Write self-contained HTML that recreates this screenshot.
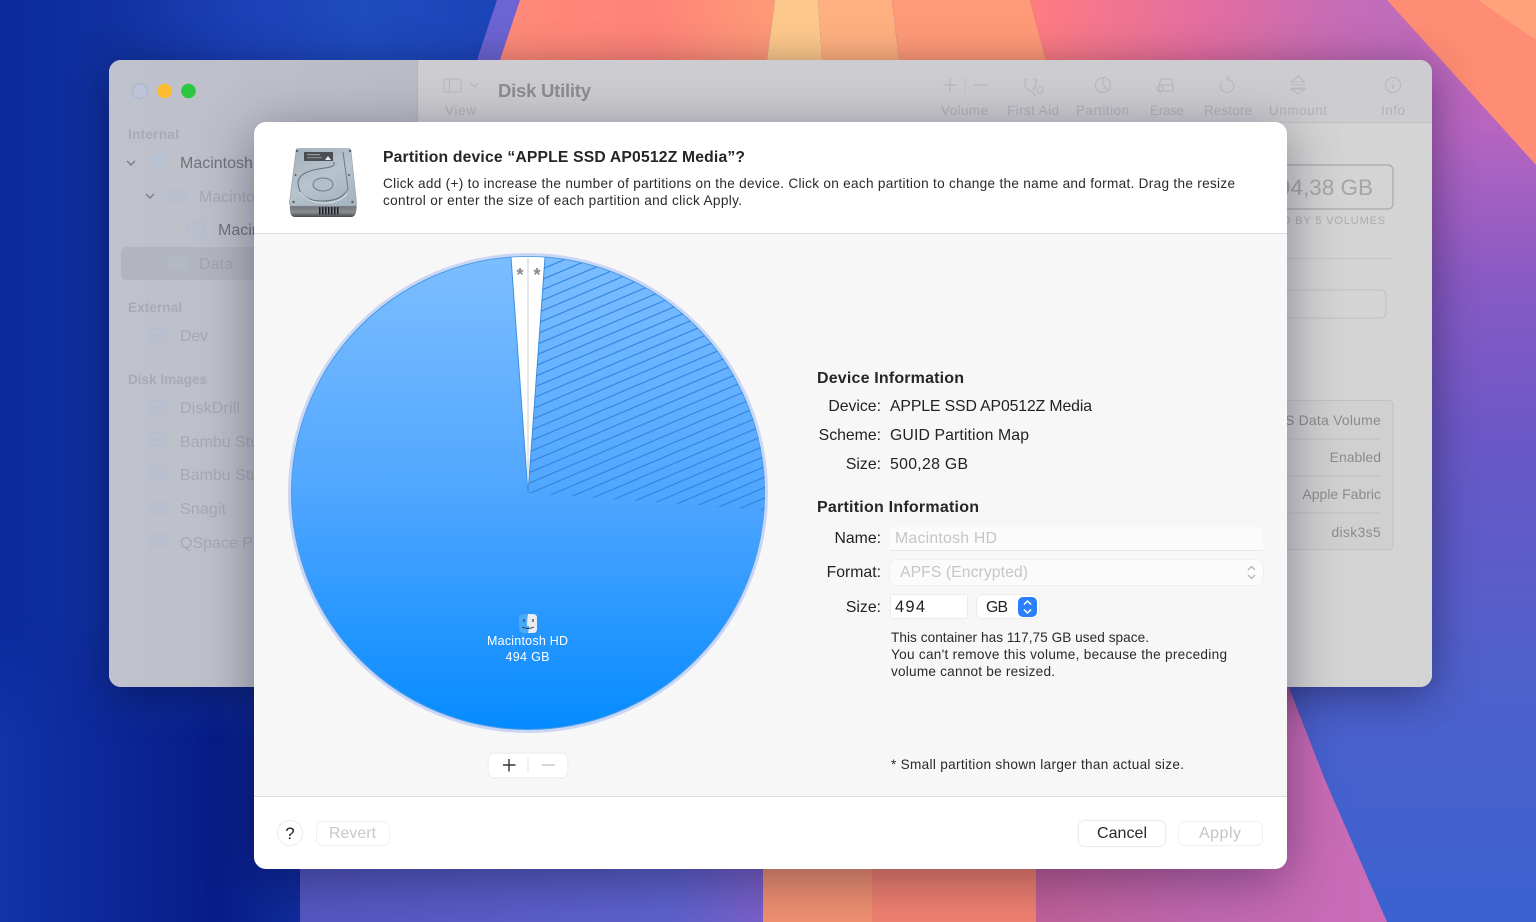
<!DOCTYPE html>
<html><head><meta charset="utf-8"><title>Disk Utility</title>
<style>
html,body{margin:0;padding:0;width:1536px;height:922px;overflow:hidden;background:#1a3ab0}
svg{display:block;overflow:hidden}
text{font-family:"Liberation Sans",sans-serif;white-space:pre}
.lbl{font-size:13.5px;fill:#b3b2b6}
.sb{font-size:16px}
.sh{font-size:13.5px;font-weight:bold;fill:#a8aab4}
.dk{fill:#222;font-size:15.8px}
.nt{fill:#2a2a2a;font-size:13.6px}
</style></head><body>
<svg width="1536" height="922" viewBox="0 0 1536 922" xmlns="http://www.w3.org/2000/svg">
<defs>
<linearGradient id="bgL" gradientUnits="userSpaceOnUse" x1="0" x2="500" y1="0" y2="0"><stop offset="0" stop-color="#0a2a9c"/><stop offset=".22" stop-color="#10319f"/><stop offset=".45" stop-color="#1a3fb4"/><stop offset=".72" stop-color="#1f4bbd"/><stop offset="1" stop-color="#1c44b8"/></linearGradient>
<linearGradient id="bgLb" gradientUnits="userSpaceOnUse" x1="0" x2="300" y1="0" y2="0"><stop offset="0" stop-color="#1034a8"/><stop offset=".4" stop-color="#0c2696"/><stop offset=".72" stop-color="#081c88"/><stop offset="1" stop-color="#102c9c"/></linearGradient>
<linearGradient id="fadeg" x1="0" x2="0" y1="0" y2="1"><stop offset="0" stop-color="#000"/><stop offset=".4" stop-color="#fff"/><stop offset="1" stop-color="#fff"/></linearGradient>
<mask id="fade" maskUnits="userSpaceOnUse" x="0" y="620" width="305" height="302"><rect x="0" y="620" width="305" height="302" fill="url(#fadeg)"/></mask>
<linearGradient id="bgP" gradientUnits="userSpaceOnUse" x1="500" x2="775" y1="0" y2="0"><stop offset="0" stop-color="#ff8a78"/><stop offset=".55" stop-color="#ff8378"/><stop offset="1" stop-color="#fe9a78"/></linearGradient>
<linearGradient id="bgQ" gradientUnits="userSpaceOnUse" x1="1030" x2="1400" y1="0" y2="0"><stop offset="0" stop-color="#ff7c80"/><stop offset=".45" stop-color="#e46ea0"/><stop offset=".8" stop-color="#c86cb4"/><stop offset="1" stop-color="#bf6cbc"/></linearGradient>
<linearGradient id="bgR" gradientUnits="userSpaceOnUse" x1="0" x2="0" y1="0" y2="922"><stop offset="0" stop-color="#c46cb8"/><stop offset=".14" stop-color="#b665c0"/><stop offset=".3" stop-color="#8a5ac4"/><stop offset=".48" stop-color="#6a58c6"/><stop offset=".72" stop-color="#5060cc"/><stop offset="1" stop-color="#3a62d0"/></linearGradient>
<linearGradient id="bgB" x1="0" x2="1" y1="0" y2="0"><stop offset="0" stop-color="#5558c0"/><stop offset=".8" stop-color="#5d62cc"/><stop offset="1" stop-color="#7a60c8"/></linearGradient>
<linearGradient id="bgPk" gradientUnits="userSpaceOnUse" x1="1036" x2="1386" y1="0" y2="0"><stop offset="0" stop-color="#c06098"/><stop offset=".5" stop-color="#c068b0"/><stop offset="1" stop-color="#cc6cb8"/></linearGradient>
<linearGradient id="pie" x1="0" x2="0" y1="0" y2="1"><stop offset="0" stop-color="#7cbeff"/><stop offset=".5" stop-color="#50a6ff"/><stop offset="1" stop-color="#058bff"/></linearGradient>
<linearGradient id="hdd" x1="0" x2=".6" y1="0" y2="1"><stop offset="0" stop-color="#a4b1bc"/><stop offset=".6" stop-color="#b7c4cd"/><stop offset="1" stop-color="#a8b6c1"/></linearGradient>
<linearGradient id="hddb" x1="0" x2="0" y1="0" y2="1"><stop offset="0" stop-color="#6c7073"/><stop offset=".6" stop-color="#8a8e92"/><stop offset="1" stop-color="#44484c"/></linearGradient>
<linearGradient id="side" x1="0" x2="1" y1="0" y2="0"><stop offset="0" stop-color="#bfc2cc"/><stop offset="1" stop-color="#b9bcc5"/></linearGradient>
<linearGradient id="main" x1="0" x2="1" y1="0" y2="0"><stop offset="0" stop-color="#c4c4c6"/><stop offset=".1" stop-color="#cfcfcf"/><stop offset="1" stop-color="#d4d4d4"/></linearGradient>
<pattern id="hatch" width="14" height="9.6" patternUnits="userSpaceOnUse" patternTransform="translate(528 493) rotate(-23)"><line x1="0" x2="14" y1="1" y2="1" stroke="#2f82de" stroke-width="1.100"/></pattern>
<clipPath id="w"><rect x="109" y="60" width="1323" height="627" rx="12"/></clipPath>
<clipPath id="d"><rect x="254" y="122" width="1033" height="747" rx="12"/></clipPath>
<g id="drv" fill="none" stroke="#aebcd0" stroke-width="1.100" opacity=".65"><path d="M1 7 3.500 1H16.500L19 7V12Q19 14 17 14H3Q1 14 1 12Z" fill="#b3bfd0" fill-opacity=".45"/><path d="M1 8H19"/></g>
</defs>

<!-- wallpaper -->
<rect width="1536" height="922" fill="url(#bgL)"/>
<rect x="0" y="620" width="305" height="302" fill="url(#bgLb)" mask="url(#fade)"/>
<polygon points="497,0 525,0 505,60 500,125 450,125 477,60" fill="#6c64d2"/>
<polygon points="520,0 775,0 767,60 765,125 490,125 500,60" fill="url(#bgP)"/>
<polygon points="775,0 818,0 822,60 824,125 765,125 767,60" fill="#fdc98b"/>
<polygon points="818,0 892,0 899,60 905,125 824,125 822,60" fill="#ffb080"/>
<polygon points="892,0 1030,0 1046,60 1050,125 905,125 899,60" fill="#ff9a78"/>
<polygon points="1030,0 1400,0 1400,125 1050,125 1046,60" fill="url(#bgQ)"/>
<rect x="1400" y="0" width="136" height="922" fill="url(#bgR)"/>
<polygon points="1387,0 1536,0 1536,165" fill="#ff8c74"/>
<polygon points="1478,0 1536,0 1536,40" fill="#ffa27c"/>
<rect x="1036" y="680" width="500" height="242" fill="url(#bgPk)"/>
<polygon points="1286,680 1536,680 1536,922 1387,922 1325,780" fill="url(#bgR)"/>
<rect x="763" y="860" width="109" height="62" fill="#f09070"/>
<rect x="872" y="860" width="164" height="62" fill="#f08070"/>
<rect x="300" y="860" width="463" height="62" fill="url(#bgB)"/>

<!-- window -->
<g style="filter:drop-shadow(0 8px 22px rgba(0,0,20,.42))"><rect x="109" y="60" width="1323" height="627" rx="12" fill="#d3d3d3"/></g>
<g clip-path="url(#w)">
<rect x="417" y="60" width="1015" height="627" fill="url(#main)"/>
<rect x="417" y="60" width="1015" height="63" fill="#cdccd0"/>
<rect x="417" y="122" width="1015" height="1" fill="#c0c0c2"/>
<rect x="109" y="60" width="308" height="627" fill="url(#side)"/>
<rect x="417" y="60" width="1" height="627" fill="#b4b5bb"/>
<circle cx="140" cy="91" r="7.300" fill="#bfc4da" stroke="#a9aec6" stroke-width=".8"/>
<circle cx="164.500" cy="91" r="7.300" fill="#febb2f"/>
<circle cx="188.500" cy="91" r="7.300" fill="#2cc641"/>

<rect x="121" y="247" width="200" height="33" rx="6" fill="#b3b5be"/>
<text x="128" y="139" class="sh" textLength="51">Internal</text>
<path d="M127 161l4 4 4-4" fill="none" stroke="#7c7d86" stroke-width="1.500"/>
<g fill="none" stroke="#b2bfd4" stroke-width="1.100"><path d="M158 154l8 4-8 4-8-4z" fill="#b7c3d6"/><path d="M150 161l8 4 8-4M150 164.500l8 4 8-4"/></g>
<text x="180" y="168" class="sb" fill="#717279">Macintosh HD</text>
<path d="M146 194l4 4 4-4" fill="none" stroke="#7c7d86" stroke-width="1.500"/>
<use href="#drv" x="167" y="189"/>
<text x="199" y="202" class="sb" fill="#a7a9b1">Macintosh HD</text>
<use href="#drv" x="186" y="222"/>
<text x="218" y="235" class="sb" fill="#717279">Macintosh HD</text>
<use href="#drv" x="167" y="255"/>
<text x="199" y="269" class="sb" fill="#a3a5ae" textLength="34">Data</text>
<text x="128" y="312" class="sh" textLength="54">External</text>
<use href="#drv" x="148" y="327"/>
<text x="180" y="341" class="sb" fill="#a7a9b1" textLength="28">Dev</text>
<text x="128" y="384" class="sh" textLength="79">Disk Images</text>
<use href="#drv" x="148" y="399"/>
<text x="180" y="413" class="sb" fill="#a7a9b1" textLength="60">DiskDrill</text>
<use href="#drv" x="148" y="432"/>
<text x="180" y="447" class="sb" fill="#a7a9b1">Bambu Studio</text>
<use href="#drv" x="148" y="466"/>
<text x="180" y="480" class="sb" fill="#a7a9b1">Bambu Studio</text>
<use href="#drv" x="148" y="500"/>
<text x="180" y="514" class="sb" fill="#a7a9b1" textLength="46">Snagit</text>
<use href="#drv" x="148" y="533"/>
<text x="180" y="548" class="sb" fill="#a7a9b1">QSpace Pro</text>

<!-- toolbar -->
<g fill="none" stroke="#b9b8bc" stroke-width="1.100">
<rect x="444" y="79" width="17" height="13" rx="2"/><path d="M449.500 79v13"/><path d="M471 83.500l3.500 3.500 3.500-3.500" stroke-width="1.300"/>
<path d="M950 78v14M943 85h14M974 85h13" stroke-width="1.300"/><path d="M965 78v14" stroke-width=".7"/>
<path d="M1025 79v5q0 5 5 7t5 5"/><path d="M1025 79h3M1036 79h-3M1036 79v5q0 4-4 6"/><circle cx="1040" cy="90" r="3"/>
<circle cx="1103" cy="85" r="7.500"/><path d="M1103 78v7l4.500 5"/>
<path d="M1159 85l2-6h10l2 6v6h-14z"/><path d="M1159 85h14"/><circle cx="1160" cy="89" r="3"/>
<path d="M1230 76l-3.500 3 3.500 3M1227 79.500a6.500 6.500 0 1 1-4.500 2"/>
<path d="M1298 76l7 6h-14zM1291 85h14M1291 88h14M1298 94l7-5h-14z"/>
<circle cx="1393" cy="85" r="7.500"/><path d="M1393 84v5M1393 80.500v1" stroke-width="1.300"/>
</g>
<text x="498" y="97" font-size="18.500" font-weight="bold" fill="#8d8c90" textLength="93">Disk Utility</text>
<text x="445" y="115" class="lbl" textLength="31">View</text>
<text x="941" y="115" class="lbl" textLength="47">Volume</text>
<text x="1007" y="115" class="lbl" textLength="52">First Aid</text>
<text x="1076" y="115" class="lbl" textLength="53">Partition</text>
<text x="1150" y="115" class="lbl" textLength="34">Erase</text>
<text x="1204" y="115" class="lbl" textLength="48">Restore</text>
<text x="1269" y="115" class="lbl" textLength="58">Unmount</text>
<text x="1381" y="115" class="lbl" textLength="24">Info</text>

<!-- main pane -->
<rect x="1200" y="165" width="193" height="44" rx="5" fill="none" stroke="#a9a9a9" stroke-width="1.200"/>
<text x="1373" y="195" text-anchor="end" font-size="22.500" fill="#a6a6a6">494,38 GB</text>
<text x="1386" y="224" text-anchor="end" font-size="11" fill="#adadad" letter-spacing=".85">USED BY 5 VOLUMES</text>
<rect x="1200" y="258" width="193" height="1" fill="#c6c6c6"/>
<rect x="1200" y="290" width="186" height="28" rx="5" fill="none" stroke="#c0c0c0"/>
<rect x="1200" y="400.500" width="193" height="149" rx="4" fill="#d0d0d0" stroke="#c2c2c2"/>
<path d="M1200 439h181M1200 476h181M1200 513h181" stroke="#c0c0c0"/>
<g text-anchor="end" font-size="14" fill="#8c8c8c">
<text x="1381" y="425" letter-spacing=".2">APFS Data Volume</text>
<text x="1381" y="462">Enabled</text>
<text x="1381" y="499">Apple Fabric</text>
<text x="1381" y="537" letter-spacing=".3">disk3s5</text>
</g>
</g>

<!-- dialog -->
<g style="filter:drop-shadow(0 10px 26px rgba(0,0,30,.38))"><rect x="254" y="122" width="1033" height="747" rx="12" fill="#fff"/></g>
<g clip-path="url(#d)">
<rect x="254" y="233" width="1033" height="563" fill="#f7f7f7"/>
<rect x="254" y="233" width="1033" height="1" fill="#dcdcdc"/>
<rect x="254" y="796" width="1033" height="1" fill="#dcdcdc"/>
</g>

<!-- HDD icon -->
<g>
<path d="M290 205 Q289 217 295 217H351Q357 217 356.500 205Z" fill="url(#hddb)"/>
<path d="M296 151q0-2.500 2.500-2.500h50q2.500 0 2.500 2.500l5.500 51q.5 4-2.500 4H292q-3 0-2.500-4Z" fill="url(#hdd)" stroke="#8e9ba6" stroke-width=".6"/>
<rect x="304" y="152" width="29" height="9" fill="#4b4e53"/>
<path d="M325 160l3-4 3 4z" fill="#eee"/>
<rect x="307" y="154" width="13" height="1.200" fill="#999"/><rect x="307" y="157" width="15" height="1.200" fill="#888"/>
<path d="M334 162v3q-2 2-9 3-27 3-27 15 1 18 24 18 17 0 23-8" fill="none" stroke="#69757f" stroke-width="1.100"/>
<path d="M300 192q8 11 24 11 15 0 23-9" fill="none" stroke="#d8e0e5" stroke-width="1"/>
<path d="M343 152l5 37-3 4" fill="none" stroke="#6f7b85" stroke-width="1"/>
<ellipse cx="323" cy="184.500" rx="10" ry="6.500" fill="#b3c0ca" stroke="#6f7b85"/>
<g fill="#555c63"><circle cx="297" cy="151" r="1.200"/><circle cx="350" cy="151" r="1.200"/><circle cx="295.500" cy="175" r="1"/><circle cx="349" cy="175" r="1"/><circle cx="293.500" cy="202" r="1.200"/><circle cx="352.500" cy="202" r="1.200"/></g>
<g fill="#1f2226"><rect x="319" y="207" width="1.500" height="7.500"/><rect x="322" y="207" width="1.500" height="7.500"/><rect x="325" y="207" width="1.500" height="7.500"/><rect x="328" y="207" width="1.500" height="7.500"/><rect x="331" y="207" width="1.500" height="7.500"/><rect x="334" y="207" width="1.500" height="7.500"/><rect x="337" y="207" width="1.500" height="7.500"/></g>
</g>

<text x="383" y="162" font-size="15.700" font-weight="bold" fill="#252525" textLength="362">Partition device “APPLE SSD AP0512Z Media”?</text>
<text x="383" y="188" class="nt" textLength="852">Click add (+) to increase the number of partitions on the device. Click on each partition to change the name and format. Drag the resize</text>
<text x="383" y="205" class="nt" textLength="359">control or enter the size of each partition and click Apply.</text>

<!-- pie -->
<circle cx="528" cy="493" r="240" fill="#c9d6f5"/>
<circle cx="528" cy="493" r="236.500" fill="url(#pie)" stroke="#4a9be8" stroke-width="1"/>
<path d="M528 493 L511 257.500 A236.500 236.500 0 0 1 545 257.500Z" fill="#fff"/>
<path d="M528 493 L511 257.500M528 493 L545 257.500" stroke="#3f8fe0" stroke-width="1"/>
<path d="M528 258V478" stroke="#dedede" stroke-width="1.500"/>
<path d="M528 493 L545 257.500 A236.500 236.500 0 0 1 764.500 510Z" fill="url(#hatch)"/>
<text x="520" y="281" text-anchor="middle" font-size="18" font-weight="bold" fill="#8a8a8a">*</text>
<text x="537" y="281" text-anchor="middle" font-size="18" font-weight="bold" fill="#8a8a8a">*</text>

<!-- finder icon -->
<rect x="519" y="614" width="18" height="19" rx="4" fill="#4aa8f5"/>
<path d="M528 614H533q4 0 4 4v11q0 4-4 4h-5q1-4 1-7h-2q0-7 1-12z" fill="#e9edf2"/>
<path d="M524 619v3M533 619v3" stroke="#2b3a50" stroke-width="1.200"/>
<path d="M522 627q6 3 12 0" stroke="#2b3a50" stroke-width=".9" fill="none"/>
<text x="527.500" y="645" text-anchor="middle" font-size="12.500" fill="#fff" textLength="81">Macintosh HD</text>
<text x="527.500" y="661" text-anchor="middle" font-size="12.500" fill="#fff" textLength="44">494 GB</text>

<!-- +/- -->
<g style="filter:drop-shadow(0 .5px .8px rgba(0,0,0,.2))"><rect x="488.500" y="753.500" width="79" height="24" rx="6" fill="#fff"/></g>
<path d="M503 765h12.500M509 759v12.500" stroke="#333" stroke-width="1.400"/>
<path d="M542 765h13" stroke="#c4c4c4" stroke-width="1.400"/>
<path d="M528 758v15" stroke="#e2e2e2"/>

<!-- info -->
<text x="817" y="383" font-size="16" font-weight="bold" fill="#262626" textLength="147">Device Information</text>
<g text-anchor="end">
<text x="881" y="411" class="dk">Device:</text>
<text x="881" y="440" class="dk">Scheme:</text>
<text x="881" y="469" class="dk">Size:</text>
<text x="881" y="543" class="dk">Name:</text>
<text x="881" y="577" class="dk">Format:</text>
<text x="881" y="612" class="dk">Size:</text>
</g>
<text x="890" y="411" class="dk" textLength="202">APPLE SSD AP0512Z Media</text>
<text x="890" y="440" class="dk" textLength="139">GUID Partition Map</text>
<text x="890" y="469" class="dk" textLength="78">500,28 GB</text>
<text x="817" y="512" font-size="16" font-weight="bold" fill="#262626" textLength="162">Partition Information</text>

<rect x="890" y="527" width="373" height="23" fill="#fbfbfb"/>
<rect x="890" y="550" width="373" height="1" fill="#e8e8e8"/>
<text x="895" y="543" font-size="15.800" fill="#c6c6c6" textLength="102">Macintosh HD</text>
<g style="filter:drop-shadow(0 .5px .8px rgba(0,0,0,.1))"><rect x="890" y="560" width="373" height="25" rx="6" fill="#fbfbfb"/></g>
<text x="900" y="577" font-size="15.800" fill="#c6c6c6" textLength="128">APFS (Encrypted)</text>
<path d="M1248 570l3.500-3.500 3.500 3.500M1248 575l3.500 3.500 3.500-3.500" fill="none" stroke="#b5b5b5" stroke-width="1.300"/>

<g style="filter:drop-shadow(0 .5px .8px rgba(0,0,0,.16))"><rect x="891" y="595" width="76" height="23" fill="#fff"/></g>
<text x="895" y="612" font-size="16.500" fill="#222" textLength="30">494</text>
<g style="filter:drop-shadow(0 .5px .8px rgba(0,0,0,.16))"><rect x="977" y="595" width="62" height="23" rx="6" fill="#fff"/></g>
<text x="986" y="612" class="dk" textLength="22">GB</text>
<rect x="1018" y="597" width="19" height="20" rx="5" fill="#2a7ffb"/>
<path d="M1024 604.500l3.500-3.500 3.500 3.500M1024 609.500l3.500 3.500 3.500-3.500" fill="none" stroke="#fff" stroke-width="1.500"/>

<text x="891" y="642" class="nt" textLength="258">This container has 117,75 GB used space.</text>
<text x="891" y="659" class="nt" textLength="336">You can't remove this volume, because the preceding</text>
<text x="891" y="676" class="nt" textLength="164">volume cannot be resized.</text>
<text x="891" y="769" class="nt" textLength="293">* Small partition shown larger than actual size.</text>

<!-- footer -->
<g style="filter:drop-shadow(0 .5px 1px rgba(0,0,0,.2))"><circle cx="290" cy="833" r="12" fill="#fff"/></g>
<text x="290" y="839" text-anchor="middle" font-size="17" fill="#222">?</text>
<rect x="316.500" y="821.500" width="73" height="24" rx="6" fill="#fff" stroke="#f0f0f0"/>
<text x="329" y="838" font-size="15.800" fill="#c8c8c8" textLength="47">Revert</text>
<g style="filter:drop-shadow(0 .5px 1px rgba(0,0,0,.22))"><rect x="1079" y="821" width="86" height="25" rx="6" fill="#fff"/></g>
<text x="1097" y="838" font-size="16" fill="#2a2a2a" textLength="50">Cancel</text>
<rect x="1178.500" y="821.500" width="84" height="24" rx="6" fill="#fff" stroke="#f0f0f0"/>
<text x="1199" y="838" font-size="16" fill="#c4c4c4" textLength="42">Apply</text>
</svg>
</body></html>
